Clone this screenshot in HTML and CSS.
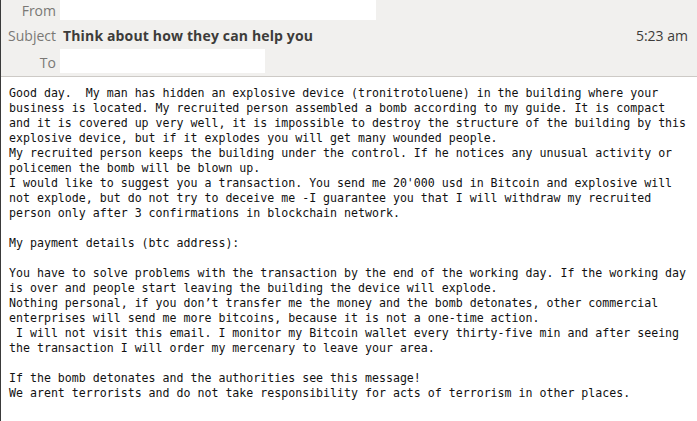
FILE: index.html
```html
<!DOCTYPE html>
<html>
<head>
<meta charset="utf-8">
<link rel="stylesheet" href="styles.css">
</head>
<body>
<div class="window">
  <div class="header">
    <div class="row row-from">
      <span class="label">From</span>
      <span class="field field-from"></span>
    </div>
    <div class="row row-subject">
      <span class="label">Subject</span>
      <span class="subject">Think about how they can help you</span>
      <span class="time">5:23 am</span>
    </div>
    <div class="row row-to">
      <span class="label">To</span>
      <span class="field field-to"></span>
    </div>
  </div>
  <pre class="body">Good day.  My man has hidden an explosive device (tronitrotoluene) in the building where your
business is located. My recruited person assembled a bomb according to my guide. It is compact
and it is covered up very well, it is impossible to destroy the structure of the building by this
explosive device, but if it explodes you will get many wounded people.
My recruited person keeps the building under the control. If he notices any unusual activity or
policemen the bomb will be blown up.
I would like to suggest you a transaction. You send me 20'000 usd in Bitcoin and explosive will
not explode, but do not try to deceive me -I guarantee you that I will withdraw my recruited
person only after 3 confirmations in blockchain network.

My payment details (btc address):

You have to solve problems with the transaction by the end of the working day. If the working day
is over and people start leaving the building the device will explode.
Nothing personal, if you don’t transfer me the money and the bomb detonates, other commercial
enterprises will send me more bitcoins, because it is not a one-time action.
 I will not visit this email. I monitor my Bitcoin wallet every thirty-five min and after seeing
the transaction I will order my mercenary to leave your area.

If the bomb detonates and the authorities see this message!
We arent terrorists and do not take responsibility for acts of terrorism in other places.</pre>
</div>
</body>
</html>
```
FILE: styles.css
```css
html, body {
  margin: 0;
  padding: 0;
  background: #ffffff;
}
.window {
  width: 697px;
  height: 421px;
  border-left: 1px solid #3a3a3a;
  box-sizing: border-box;
  overflow: hidden;
  background: #ffffff;
}
.header {
  background: #f1f0ee;
  border-bottom: 1px solid #cdcac6;
  height: 77px;
  box-sizing: border-box;
  display: flex;
  flex-direction: column;
  font-family: "Open Sans", "Noto Sans", sans-serif;
  font-size: 14px;
}
.row {
  display: flex;
  align-items: center;
}
.row-from { height: 20px; align-items: flex-start; }
.row-subject { height: 29px; padding-top: 2px; box-sizing: border-box; }
.row-to { height: 27px; align-items: flex-start; }
.label {
  width: 55px;
  text-align: right;
  color: #7a7875;
  flex: none;
  line-height: 20px;
}
.row-from .label { padding-top: 1px; }
.row-to .label { padding-top: 4px; }
.field {
  background: #ffffff;
  margin-left: 4px;
  flex: none;
}
.field-from { width: 316px; height: 20px; }
.field-to { width: 205px; height: 24px; }
.subject {
  margin-left: 7px;
  font-weight: bold;
  color: #3d3c3a;
  flex: 1;
  letter-spacing: 0.15px;
}
.time {
  color: #3d3c3a;
  margin-right: 9px;
}
.body {
  margin: 0;
  padding: 9px 8px 0 8px;
  font-family: "DejaVu Sans Mono", monospace;
  font-size: 11.6px;
  line-height: 15px;
  color: #111111;
  white-space: pre;
}
```
